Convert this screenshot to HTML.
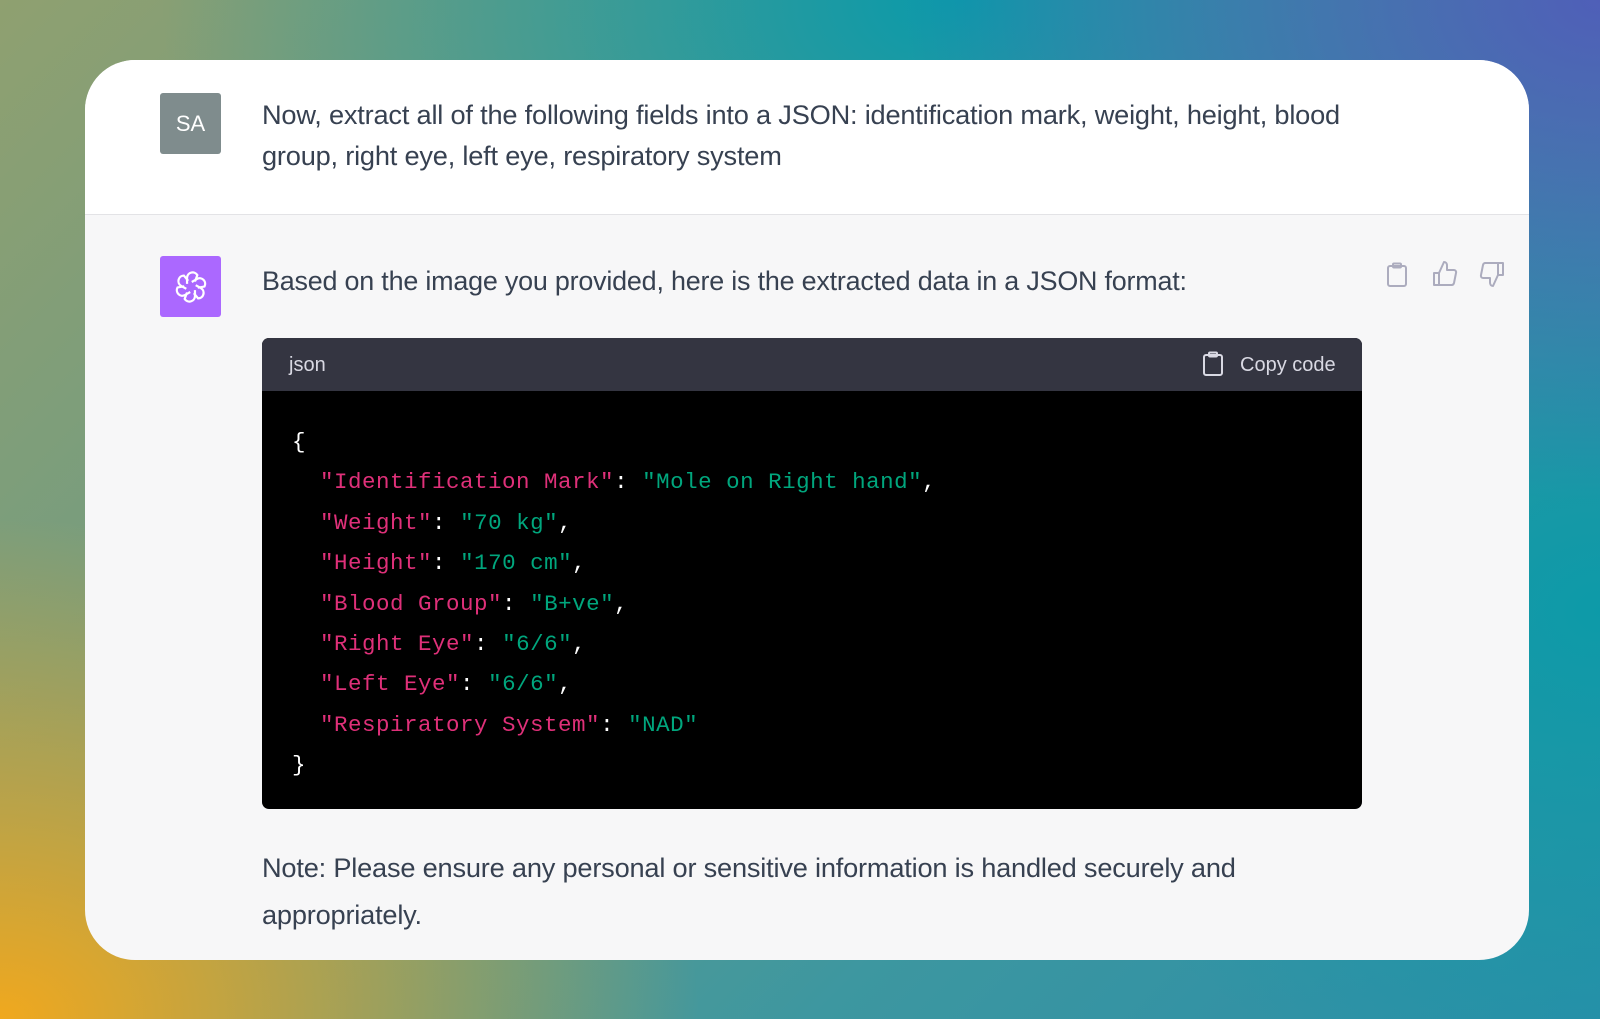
<!DOCTYPE html>
<html><head><meta charset="utf-8"><style>
*{margin:0;padding:0;box-sizing:border-box}
html,body{width:1600px;height:1019px;overflow:hidden}
body{position:relative;font-family:"Liberation Sans",sans-serif;
background:
radial-gradient(ellipse 700px 500px at 0% 100%, #f0a81e 0%, rgba(240,168,30,0) 100%),
radial-gradient(ellipse 700px 500px at 100% 0%, #4f5fb8 0%, rgba(79,95,184,0) 100%),
radial-gradient(ellipse 800px 500px at 60% 0%, #0a9aaa 0%, rgba(10,154,170,0) 100%),
radial-gradient(ellipse 600px 500px at 100% 60%, #0d9aa8 0%, rgba(13,154,168,0) 100%),
linear-gradient(135deg,#8fa070 0%,#6a9b86 40%,#3d97a0 70%,#2a8ea8 100%);}
.card{position:absolute;left:85px;top:60px;width:1444px;height:900px;border-radius:50px;overflow:hidden;background:#f7f7f8}
.user{position:absolute;left:0;top:0;width:100%;height:155px;background:#fff;border-bottom:1px solid #e3e3e6}
.av{position:absolute;left:75px;width:61px;height:61px;border-radius:3px;color:#fff;display:flex;align-items:center;justify-content:center}
.txt{position:absolute;left:177px;color:#374151;font-size:27.2px;letter-spacing:-0.2px}
.code{position:absolute;left:177px;top:278px;width:1100px;height:471px;background:#000;border-radius:7px;overflow:hidden}
.hdr{height:53px;background:#343541;color:#d9d9e3;font-size:20px;position:relative}
pre{font-family:"Liberation Mono",monospace;font-size:22.5px;letter-spacing:0.5px;line-height:40.4px;color:#fff;position:absolute;left:30px;top:84px}
.k{color:#df3079}.s{color:#00a67d}
</style></head><body>
<div class="card">
<div class="user">
<div class="av" style="top:33px;background:#7f8c8d;font-size:22px">SA</div>
<div class="txt" style="top:34px;line-height:41px">Now, extract all of the following fields into a JSON: identification mark, weight, height, blood<br>group, right eye, left eye, respiratory system</div>
</div>
<div class="av" style="top:196px;background:#ab68ff">
<svg width="38" height="38" viewBox="0 0 24 24" fill="none" stroke="#fff" stroke-width="1.4"><g transform="translate(12 12)">
<path d="M-2.5 -2 L-2.5 -6 A3.5 3.5 0 0 1 4 -7.5 L 2.5 -3.5" transform="rotate(0)"/>
<path d="M-2.5 -2 L-2.5 -6 A3.5 3.5 0 0 1 4 -7.5 L 2.5 -3.5" transform="rotate(60)"/>
<path d="M-2.5 -2 L-2.5 -6 A3.5 3.5 0 0 1 4 -7.5 L 2.5 -3.5" transform="rotate(120)"/>
<path d="M-2.5 -2 L-2.5 -6 A3.5 3.5 0 0 1 4 -7.5 L 2.5 -3.5" transform="rotate(180)"/>
<path d="M-2.5 -2 L-2.5 -6 A3.5 3.5 0 0 1 4 -7.5 L 2.5 -3.5" transform="rotate(240)"/>
<path d="M-2.5 -2 L-2.5 -6 A3.5 3.5 0 0 1 4 -7.5 L 2.5 -3.5" transform="rotate(300)"/>
</g></svg></div>
<div class="txt" style="top:206px;font-size:26.9px">Based on the image you provided, here is the extracted data in a JSON format:</div>
<svg style="position:absolute;left:1301px;top:202px" width="22" height="26" viewBox="0 0 22 26" fill="none" stroke="#acacbe" stroke-width="2" stroke-linejoin="round"><rect x="2" y="4" width="18" height="20" rx="2"/><rect x="7" y="1.5" width="8" height="4" rx="1"/></svg>
<svg style="position:absolute;left:1347px;top:200px" width="26" height="28" viewBox="0 0 26 28" fill="none" stroke="#acacbe" stroke-width="2" stroke-linejoin="round"><path d="M2 13h5v12H2zM7 13l5-11c2 0 3 1.5 3 3.5V10h7c1.5 0 2.5 1.5 2 3l-2 10c-.3 1.2-1.2 2-2.4 2H7"/></svg>
<svg style="position:absolute;left:1394px;top:200px" width="26" height="28" viewBox="0 0 26 28" fill="none" stroke="#acacbe" stroke-width="2" stroke-linejoin="round"><path d="M24 15h-5V3h5zM19 15l-5 11c-2 0-3-1.5-3-3.5V18H4c-1.5 0-2.5-1.5-2-3l2-10c.3-1.2 1.2-2 2.4-2H19"/></svg>
<div class="code">
<div class="hdr"><span style="position:absolute;left:27px;top:16px">json</span>
<svg style="position:absolute;left:940px;top:13px" width="22" height="26" viewBox="0 0 22 26" fill="none" stroke="#d9d9e3" stroke-width="2" stroke-linejoin="round"><rect x="2" y="4" width="18" height="20" rx="2"/><rect x="7" y="1.5" width="8" height="4" rx="1"/></svg>
<span style="position:absolute;left:978px;top:16px">Copy code</span></div>
<pre>{
  <span class="k">"Identification Mark"</span>: <span class="s">"Mole on Right hand"</span>,
  <span class="k">"Weight"</span>: <span class="s">"70 kg"</span>,
  <span class="k">"Height"</span>: <span class="s">"170 cm"</span>,
  <span class="k">"Blood Group"</span>: <span class="s">"B+ve"</span>,
  <span class="k">"Right Eye"</span>: <span class="s">"6/6"</span>,
  <span class="k">"Left Eye"</span>: <span class="s">"6/6"</span>,
  <span class="k">"Respiratory System"</span>: <span class="s">"NAD"</span>
}</pre>
</div>
<div class="txt" style="top:784px;line-height:47px">Note: Please ensure any personal or sensitive information is handled securely and<br>appropriately.</div>
</div>
</body></html>
